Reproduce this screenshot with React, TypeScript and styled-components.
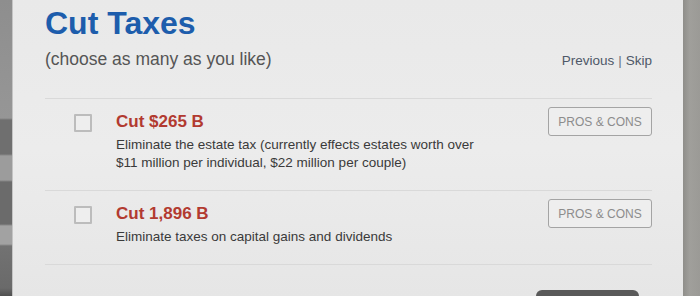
import React from "react";
import styled, { createGlobalStyle } from "styled-components";

const Global = createGlobalStyle`
  html, body { margin: 0; padding: 0; height: 296px; overflow: hidden; background: #9a9996; }
  #root { height: 296px; }
  * { box-sizing: border-box; }
`;

const Screen = styled.div`
  display: flex;
  height: 296px;
  width: 700px;
  font-family: "Liberation Sans", Arial, sans-serif;
`;

const LeftEdge = styled.div`
  width: 13px;
  flex: none;
  background: linear-gradient(
    to bottom,
    #8e8e8e 0px,
    #969696 118px,
    #6f6f6f 120px,
    #6f6f6f 154px,
    #9c9c9c 156px,
    #9c9c9c 180px,
    #6b6b6b 182px,
    #6b6b6b 224px,
    #a2a2a2 226px,
    #a2a2a2 244px,
    #727272 246px,
    #6a6a6a 288px,
    #4f4f4f 296px
  );
  border-right: 1px solid #c4c4c4;
`;

const RightEdge = styled.div`
  width: 17px;
  flex: none;
  background: linear-gradient(to right, #8f8e8a, #a09f9b 40%, #9b9a96);
`;

const Panel = styled.main`
  flex: 1;
  background: linear-gradient(to bottom, #e9e9e9, #ececec 50%, #e6e6e6);
  padding: 5px 31px 0 32px;
  display: flex;
  flex-direction: column;
  overflow: hidden;
`;

const Title = styled.h1`
  margin: 0;
  font-size: 32px;
  line-height: 36px;
  font-weight: 700;
  color: #1d5dac;
`;

const SubRow = styled.div`
  margin-top: 7px;
  display: flex;
  align-items: baseline;
  justify-content: space-between;
  padding-bottom: 28px;
  border-bottom: 1px solid #d9d9d9;
`;

const Subtitle = styled.p`
  margin: 0;
  font-size: 17.5px;
  line-height: 22px;
  color: #555555;
`;

const Nav = styled.div`
  font-size: 13.5px;
  color: #4e5868;
  display: flex;
  gap: 4px;
  align-items: baseline;
`;

const NavLink = styled.span`
  cursor: pointer;
`;

const Divider = styled.span`
  color: #6a7282;
`;

const Row = styled.div`
  display: flex;
  align-items: flex-start;
  padding: 8px 0 18px 29px;
  border-bottom: 1px solid #d9d9d9;
`;

const Box = styled.span`
  width: 18px;
  height: 18px;
  flex: none;
  margin-top: 7px;
  border: 2px solid #bcbcbc;
  background: #eeeeee;
  border-radius: 1px;
`;

const Text = styled.div`
  flex: 1;
  margin: 5px 0 0 24px;
`;

const ItemTitle = styled.div`
  font-size: 17px;
  line-height: 20px;
  font-weight: 700;
  color: #b23a30;
`;

const Desc = styled.div`
  margin-top: 4px;
  font-size: 13.5px;
  line-height: 18px;
  color: #3a3a3a;
  max-width: 362px;
`;

const ProsButton = styled.button`
  flex: none;
  width: 104px;
  height: 29px;
  border: 1px solid #a4a4a4;
  border-radius: 3px;
  background: #eeeeee;
  color: #8c8c8c;
  font-family: "Liberation Sans", Arial, sans-serif;
  font-size: 12px;
  padding: 0;
`;

const Footer = styled.div`
  display: flex;
  justify-content: flex-end;
  padding: 25px 13px 0 0;
`;

const NextButton = styled.button`
  width: 103px;
  height: 30px;
  border: none;
  border-radius: 6px 6px 0 0;
  background: #595959;
  padding: 0;
`;

const items = [
  {
    title: "Cut $265 B",
    desc: "Eliminate the estate tax (currently effects estates worth over $11 million per individual, $22 million per couple)",
  },
  {
    title: "Cut 1,896 B",
    desc: "Eliminate taxes on capital gains and dividends",
  },
];

export default function App() {
  return (
    <>
      <Global />
      <Screen>
        <LeftEdge />
        <Panel>
          <Title>Cut Taxes</Title>
          <SubRow>
            <Subtitle>(choose as many as you like)</Subtitle>
            <Nav>
              <NavLink>Previous</NavLink>
              <Divider>|</Divider>
              <NavLink>Skip</NavLink>
            </Nav>
          </SubRow>
          {items.map((it) => (
            <Row key={it.title}>
              <Box />
              <Text>
                <ItemTitle>{it.title}</ItemTitle>
                <Desc>{it.desc}</Desc>
              </Text>
              <ProsButton>PROS &amp; CONS</ProsButton>
            </Row>
          ))}
          <Footer>
            <NextButton aria-label="Next" />
          </Footer>
        </Panel>
        <RightEdge />
      </Screen>
    </>
  );
}
